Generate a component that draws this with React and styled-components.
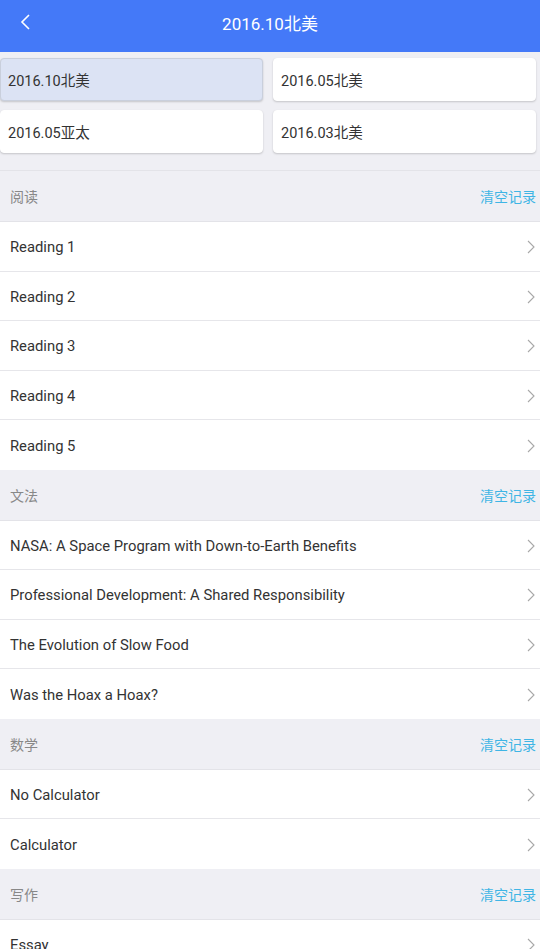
import React from 'react';
import styled, { createGlobalStyle } from 'styled-components';

const GlobalStyle = createGlobalStyle`
  html, body {
    margin: 0;
    padding: 0;
    background: #efeff4;
    font-family: Roboto, 'Noto Sans CJK SC', sans-serif;
  }
`;

const Page = styled.div`
  width: 540px;
  min-height: 949px;
  background: #efeff4;
  overflow: hidden;
`;

const TopBar = styled.header`
  height: 52px;
  padding-bottom: 7px;
  box-sizing: border-box;
  background: #4479f8;
  display: flex;
  align-items: center;
  justify-content: center;
  position: relative;
  color: #fff;
  font-size: 17px;
`;

const BackButton = styled.button`
  position: absolute;
  left: 14px;
  top: 10px;
  width: 24px;
  height: 24px;
  padding: 0;
  border: none;
  background: transparent;
  display: flex;
  align-items: center;
  justify-content: center;
`;

const TermGrid = styled.div`
  display: grid;
  grid-template-columns: 1fr 1fr;
  gap: 9px 10px;
  padding: 6px 4px 17px 0;
  border-bottom: 1px solid #e3e3e8;
`;

const TermButton = styled.div`
  height: 43px;
  box-sizing: border-box;
  display: flex;
  align-items: center;
  padding-left: 7px;
  font-size: 14.5px;
  color: #333;
  border-radius: 4px;
  background: ${({ $active }) => ($active ? '#dce3f4' : '#fff')};
  border: 1px solid ${({ $active }) => ($active ? '#c9cfdc' : '#fff')};
  box-shadow: 0 1px 2px rgba(0, 0, 0, 0.18);
`;

const SectionHeader = styled.div`
  height: 51px;
  box-sizing: border-box;
  display: flex;
  align-items: center;
  justify-content: space-between;
  padding: 0 4px 0 10px;
  background: #efeff4;
  border-bottom: 1px solid #e3e3e8;
`;

const SectionTitle = styled.span`
  font-size: 14px;
  color: #888;
`;

const ClearLink = styled.span`
  font-size: 14px;
  color: #3fb5e5;
`;

const Row = styled.div`
  height: 49.5px;
  box-sizing: border-box;
  display: flex;
  align-items: center;
  justify-content: space-between;
  padding: 2px 4px 0 10px;
  background: #fff;
  border-bottom: 1px solid #e6e6ea;
  font-size: 14.8px;
  color: #333;

  &:last-child {
    border-bottom: none;
  }
`;

const Chevron = () => (
  <svg width="10" height="16" viewBox="0 0 10 16">
    <path d="M2 2 L8 8 L2 14" fill="none" stroke="#a8a8a8" strokeWidth="1.1" />
  </svg>
);

const sections = [
  { title: '阅读', items: ['Reading 1', 'Reading 2', 'Reading 3', 'Reading 4', 'Reading 5'] },
  {
    title: '文法',
    items: [
      'NASA: A Space Program with Down-to-Earth Benefits',
      'Professional Development: A Shared Responsibility',
      'The Evolution of Slow Food',
      'Was the Hoax a Hoax?',
    ],
  },
  { title: '数学', items: ['No Calculator', 'Calculator'] },
  { title: '写作', items: ['Essay'] },
];

const terms = ['2016.10北美', '2016.05北美', '2016.05亚太', '2016.03北美'];

export default function App() {
  return (
    <Page>
      <GlobalStyle />
      <TopBar>
        <BackButton>
          <svg width="14" height="18" viewBox="0 0 14 18">
            <path d="M10 2 L3 9 L10 16" fill="none" stroke="#fff" strokeWidth="1.6" />
          </svg>
        </BackButton>
        2016.10北美
      </TopBar>

      <TermGrid>
        {terms.map((t, i) => (
          <TermButton key={t} $active={i === 0}>{t}</TermButton>
        ))}
      </TermGrid>

      {sections.map((s) => (
        <section key={s.title}>
          <SectionHeader>
            <SectionTitle>{s.title}</SectionTitle>
            <ClearLink>清空记录</ClearLink>
          </SectionHeader>
          <div>
            {s.items.map((item) => (
              <Row key={item}>
                <span>{item}</span>
                <Chevron />
              </Row>
            ))}
          </div>
        </section>
      ))}
    </Page>
  );
}
